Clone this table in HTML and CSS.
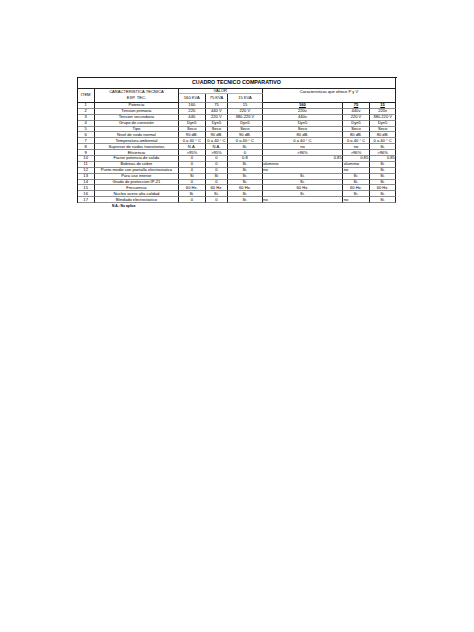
FILE: index.html
```html
<!DOCTYPE html>
<html lang="es">
<head>
<meta charset="utf-8">
<title>Cuadro tecnico comparativo</title>
<link rel="stylesheet" href="styles.css">
</head>
<body>
<div class="page">
  <div class="tbl">
    <div class="c title">CUADRO TECNICO COMPARATIVO</div>

    <div class="c item-h">ITEM</div>
    <div class="c car-h"><span>CARACTERISTICA TECNICA</span><span>EXP. TEC.</span></div>
    <div class="c valor">VALOR</div>
    <div class="c ofrece">Caracteristicas que ofrece P y V</div>
    <div class="c">160 KVA</div>
    <div class="c">75 KVA</div>
    <div class="c">15 KVA</div>

    <div class="c">1</div><div class="c">Potencia</div><div class="c">160</div><div class="c">75</div><div class="c">15</div><div class="c b">160</div><div class="c b">75</div><div class="c b">15</div>
    <div class="c">2</div><div class="c">Tension primaria</div><div class="c">220</div><div class="c">440 V</div><div class="c">220 V</div><div class="c">220v</div><div class="c">440v</div><div class="c">220v</div>
    <div class="c">3</div><div class="c">Tension secundaria</div><div class="c">440</div><div class="c">220 V</div><div class="c">380-220 V</div><div class="c">440v</div><div class="c">220 V</div><div class="c">380-220 V</div>
    <div class="c">4</div><div class="c">Grupo de conexión</div><div class="c">Dyn5</div><div class="c">Dyn5</div><div class="c">Dyn5</div><div class="c">Dyn5</div><div class="c">Dyn5</div><div class="c">Dyn5</div>
    <div class="c">5</div><div class="c">Tipo</div><div class="c">Seco</div><div class="c">Seco</div><div class="c">Seco</div><div class="c">Seco</div><div class="c">Seco</div><div class="c">Seco</div>
    <div class="c">6</div><div class="c">Nivel de ruido normal</div><div class="c">90 dB.</div><div class="c">90 dB.</div><div class="c">90 dB.</div><div class="c">80 dB.</div><div class="c">80 dB.</div><div class="c">80 dB.</div>
    <div class="c">7</div><div class="c">Temperatura ambiental</div><div class="c">0 a 40 ° C</div><div class="c">0 a 40 ° C</div><div class="c">0 a 40 ° C</div><div class="c">0 a 40 ° C</div><div class="c">0 a 40 ° C</div><div class="c">0 a 40 ° C</div>
    <div class="c">8</div><div class="c">Supresor de ruidos transitorios</div><div class="c">N.A.</div><div class="c">N.A.</div><div class="c">Si.</div><div class="c">no</div><div class="c">no</div><div class="c">Si.</div>
    <div class="c">9</div><div class="c">Eficiencia</div><div class="c">&gt;95%</div><div class="c">&gt;95%</div><div class="c">0</div><div class="c">&gt;96%</div><div class="c">&gt;96%</div><div class="c">&gt;96%</div>
    <div class="c">10</div><div class="c">Factor potencia de salida</div><div class="c">0</div><div class="c">0</div><div class="c">0.8</div><div class="c r">0.85</div><div class="c r">0.85</div><div class="c r">0.85</div>
    <div class="c">11</div><div class="c">Bobinas de cobre</div><div class="c">0</div><div class="c">0</div><div class="c">Si.</div><div class="c l">aluminio</div><div class="c l">aluminio</div><div class="c">Si.</div>
    <div class="c">12</div><div class="c">Punto medio con pantalla electrostatica</div><div class="c">0</div><div class="c">0</div><div class="c">Si.</div><div class="c l">no</div><div class="c l">no</div><div class="c">Si.</div>
    <div class="c">13</div><div class="c">Para uso interior</div><div class="c">Si</div><div class="c">Si</div><div class="c">Si.</div><div class="c">Si.</div><div class="c">Si.</div><div class="c">Si.</div>
    <div class="c">14</div><div class="c">Grado de proteccion IP-21</div><div class="c">0</div><div class="c">0</div><div class="c">Si.</div><div class="c">Si.</div><div class="c">Si.</div><div class="c">Si.</div>
    <div class="c">15</div><div class="c">Frecuencia</div><div class="c">60 Hz.</div><div class="c">60 Hz.</div><div class="c">60 Hz.</div><div class="c">60 Hz.</div><div class="c">60 Hz.</div><div class="c">60 Hz.</div>
    <div class="c">16</div><div class="c">Nucleo acero alta calidad</div><div class="c">Si.</div><div class="c">Si.</div><div class="c">Si.</div><div class="c">Si.</div><div class="c">Si.</div><div class="c">Si.</div>
    <div class="c">17</div><div class="c">Blindado electrostatico</div><div class="c">0</div><div class="c">0</div><div class="c">Si.</div><div class="c l">no</div><div class="c l">no</div><div class="c">Si.</div>
  </div>
  <div class="note">N.A.: No aplica</div>
</div>
</body>
</html>
```

FILE: styles.css
```css
html, body {
  margin: 0;
  padding: 0;
  background: #ffffff;
}

.page {
  padding: 77px 0 0 76.5px;
  font-family: "Liberation Sans", Arial, sans-serif;
  color: #000;
}

.tbl {
  display: grid;
  width: 320px;
  box-sizing: border-box;
  grid-template-columns: 17.3px 84.2px 26.6px 22.7px 34.3px 80.7px 26.5px 26.7px;
  grid-template-rows: 10.7px 5.8px 8.5px repeat(17, 5.9px);
  border-left: 1px solid #1a1a1a;
  border-top: 1px solid #1a1a1a;
}

.c {
  box-sizing: border-box;
  border-right: 1px solid #222;
  border-bottom: 1px solid #8a8a8a;
  font-size: 4.1px;
  line-height: 1;
  display: flex;
  align-items: center;
  justify-content: center;
  white-space: nowrap;
  overflow: hidden;
  padding: 0 0.6px;
}

.title {
  grid-column: 1 / span 8;
  font-size: 5.3px;
  font-weight: bold;
  border-bottom: 1px solid #222;
}

.item-h {
  grid-row: span 2;
  border-bottom: 1px solid #222;
}

.car-h {
  grid-row: span 2;
  flex-direction: column;
  justify-content: space-around;
  padding: 0.8px 0;
  border-bottom: 1px solid #222;
}

.valor {
  grid-column: span 3;
  border-bottom: 1px solid #b0b0b0;
}

.ofrece {
  grid-column: span 3;
  grid-row: span 2;
  align-items: flex-start;
  padding-top: 1.2px;
  border-bottom: 1px solid #222;
}

.b {
  font-weight: bold;
  text-decoration: underline;
  text-decoration-thickness: 0.4px;
}

.r {
  justify-content: flex-end;
}

.l {
  justify-content: flex-start;
}

.note {
  margin: 1px 0 0 35.5px;
  font-size: 3.3px;
  font-weight: bold;
}
```
